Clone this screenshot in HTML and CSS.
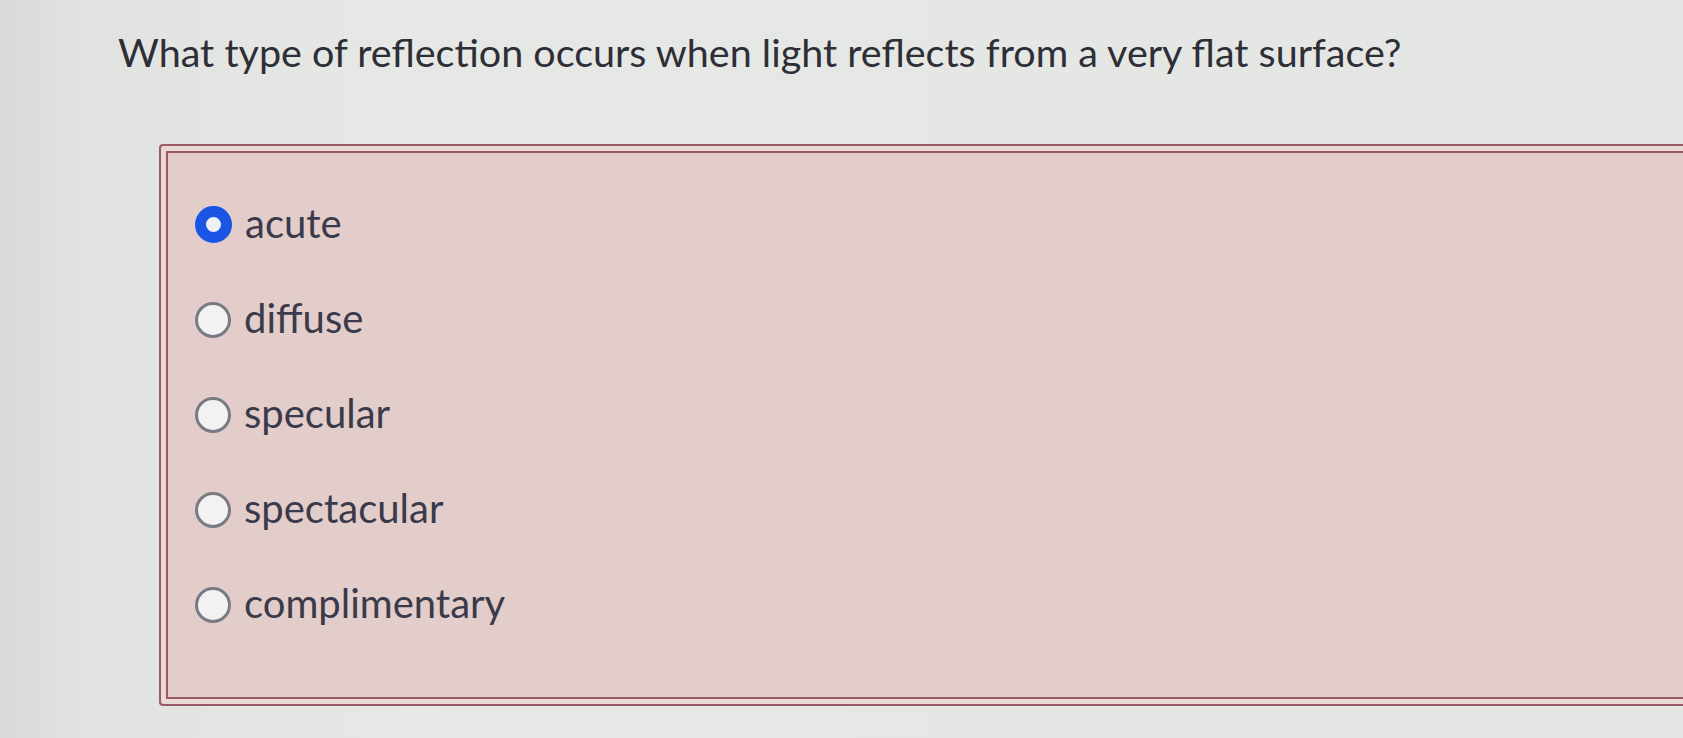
FILE: index.html
```html
<!DOCTYPE html>
<html lang="en">
<head>
<meta charset="utf-8">
<title>Question</title>
<link rel="stylesheet" href="styles.css">
</head>
<body>
<div class="page">
  <h1 class="question-title">What type of reflection occurs when light reflects from a very flat surface?</h1>
  <div class="answers">
    <label class="answer"><span class="radio checked"></span><span class="answer-text">acute</span></label>
    <label class="answer"><span class="radio"></span><span class="answer-text">diffuse</span></label>
    <label class="answer"><span class="radio"></span><span class="answer-text">specular</span></label>
    <label class="answer"><span class="radio"></span><span class="answer-text">spectacular</span></label>
    <label class="answer"><span class="radio"></span><span class="answer-text">complimentary</span></label>
  </div>
</div>
</body>
</html>
```
FILE: styles.css
```css
html, body {
  margin: 0;
  padding: 0;
  height: 100%;
  overflow: hidden;
}
body {
  background: linear-gradient(90deg, #d8dad8 0px, #e1e3e1 80px, #e6e8e6 400px, #e4e6e4 1683px);
  font-family: Lato, "Open Sans", sans-serif;
  color: #34343e;
}
.page {
  padding-top: 24px;
}
.question-title {
  margin: 0 0 0 118px;
  font-size: 39.5px;
  font-weight: 400;
  line-height: 56px;
  color: #2d2e36;
}
.answers {
  margin-top: 64px;
  margin-left: 159px;
  height: 562px;
  box-sizing: border-box;
  border: 2px solid #9c5a68;
  border-right: none;
  border-radius: 4px 0 0 4px;
  background: #e3cdcb;
  box-shadow: inset 5px 0 0 0 #ead8d7, inset 0 5px 0 0 #ead8d7, inset 0 -5px 0 0 #ead8d7,
              inset 7px 0 0 0 #9c5a68, inset 0 7px 0 0 #9c5a68, inset 0 -7px 0 0 #9c5a68;
  padding-top: 31px;
  padding-left: 34px;
  display: flex;
  flex-direction: column;
}
.answer {
  display: flex;
  align-items: center;
  height: 95px;
  gap: 13px;
}
.radio {
  width: 36px;
  height: 36px;
  box-sizing: border-box;
  border-radius: 50%;
  border: 3px solid #7a7a84;
  background: #f2f2f2;
  flex: none;
}
.radio.checked {
  width: 37px;
  height: 37px;
  border: 11px solid #1a55e6;
  background: #eef0f6;
}
.answer-text {
  font-size: 40px;
  color: #3a3a4a;
  line-height: 1;
  padding-bottom: 4px;
}
```
